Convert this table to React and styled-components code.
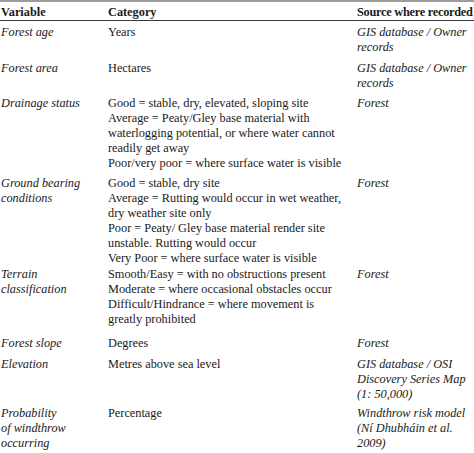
import React from "react";
import styled, { createGlobalStyle } from "styled-components";

const Global = createGlobalStyle`
  html, body { margin: 0; padding: 0; background: #ffffff; }
  body { width: 474px; height: 453px; overflow: hidden; }
`;

const Table = styled.div`
  width: 474px;
  font-family: "Liberation Serif", "Times New Roman", serif;
  font-size: 12.3px;
  line-height: 15px;
  color: #1a1a1a;
  overflow: hidden;
`;

const Grid = styled.div`
  display: grid;
  grid-template-columns: 107px 249px 1fr;
  padding-left: 1px;
`;

const HeadRow = styled(Grid)`
  border-top: 2px solid #9c9c9c;
  border-bottom: 1px solid #3a3a3a;
  padding-top: 3px;
  font-weight: bold;
  font-style: italic;
`;

const Body = styled.div`
  padding-top: 4px;
`;

const Row = styled(Grid)`
  height: ${(p) => p.$h}px;
`;

const Cell = styled.div`
  white-space: nowrap;
  font-style: ${(p) => (p.$italic ? "italic" : "normal")};
  letter-spacing: ${(p) => (p.$tight ? "-0.25px" : "normal")};
`;

const rows = [
  { v: ["Forest age"], c: ["Years"], s: ["GIS database / Owner", "records"], h: 36 },
  { v: ["Forest area"], c: ["Hectares"], s: ["GIS database / Owner", "records"], h: 35 },
  {
    v: ["Drainage status"],
    c: [
      "Good = stable, dry, elevated, sloping site",
      "Average = Peaty/Gley base material with",
      "waterlogging potential, or where water cannot",
      "readily get away",
      "Poor/very poor = where surface water is visible",
    ],
    s: ["Forest"],
    h: 80,
  },
  {
    v: ["Ground bearing", "conditions"],
    c: [
      "Good = stable, dry site",
      "Average = Rutting would occur in wet weather,",
      "dry weather site only",
      "Poor = Peaty/ Gley base material render site",
      "unstable. Rutting would occur",
      "Very Poor = where surface water is visible",
    ],
    s: ["Forest"],
    h: 91,
  },
  {
    v: ["Terrain", "classification"],
    c: [
      "Smooth/Easy = with no obstructions present",
      "Moderate = where occasional obstacles occur",
      "Difficult/Hindrance = where movement is",
      "greatly prohibited",
    ],
    s: ["Forest"],
    h: 69,
  },
  { v: ["Forest slope"], c: ["Degrees"], s: ["Forest"], h: 21 },
  {
    v: ["Elevation"],
    c: ["Metres above sea level"],
    s: ["GIS database / OSI", "Discovery Series Map", "(1: 50,000)"],
    h: 49,
  },
  {
    v: ["Probability", "of windthrow", "occurring"],
    c: ["Percentage"],
    s: ["Windthrow risk model", "(Ní Dhubháin et al.", "2009)"],
    h: 47,
  },
];

const Lines = ({ items }) =>
  items.map((t, i) => (
    <React.Fragment key={i}>
      {i > 0 && <br />}
      {t}
    </React.Fragment>
  ));

export default function App() {
  return (
    <>
      <Global />
      <Table>
        <HeadRow>
          <Cell>Variable</Cell>
          <Cell>Category</Cell>
          <Cell $tight>Source where recorded</Cell>
        </HeadRow>
        <Body>
          {rows.map((r, i) => (
            <Row key={i} $h={r.h}>
              <Cell $italic>
                <Lines items={r.v} />
              </Cell>
              <Cell>
                <Lines items={r.c} />
              </Cell>
              <Cell $italic>
                <Lines items={r.s} />
              </Cell>
            </Row>
          ))}
        </Body>
      </Table>
    </>
  );
}
